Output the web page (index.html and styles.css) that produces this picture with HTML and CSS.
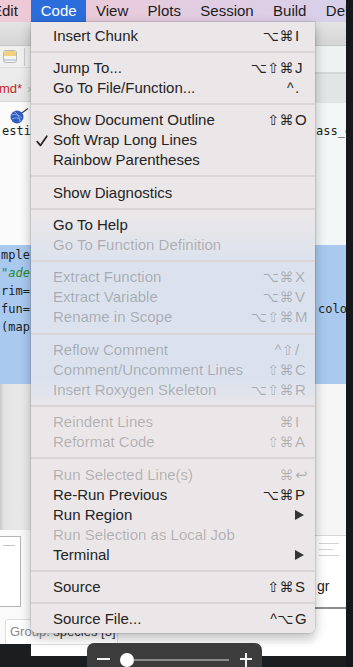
FILE: index.html
```html
<!DOCTYPE html>
<html>
<head>
<meta charset="utf-8">
<link rel="stylesheet" href="styles.css">
</head>
<body>
<div class="screen">
  <div class="window">
    <nav class="menubar">
      <span class="mb-item mb-edit">Edit</span>
      <span class="mb-item mb-active">Code</span>
      <span class="mb-item">View</span>
      <span class="mb-item">Plots</span>
      <span class="mb-item">Session</span>
      <span class="mb-item">Build</span>
      <span class="mb-item">Debug</span>
    </nav>
    <div class="panes">
      <div class="pane-left">
        <div class="l-toolbar"></div>
        <div class="l-tools">
          <svg class="note-icon" width="14" height="13" viewBox="0 0 14 13"><rect x="0.5" y="0.5" width="13" height="12" rx="2" fill="#f6f4ee" stroke="#b9b9b9"/><path d="M1 3 Q1 1 3 1 H11 Q13 1 13 3 V6 H1 Z" fill="#f1d27c"/><rect x="1" y="9" width="12" height="2" fill="#c9d3e3"/></svg>
          <span class="l-divider"></span>
        </div>
        <div class="l-tabs"><span class="tab-name">md*</span><span class="tab-close">›</span></div>
        <div class="l-editor">
          <svg class="yarn" width="22" height="16" viewBox="0 0 22 16"><line x1="11" y1="7" x2="20" y2="0.5" stroke="#3a3a3a" stroke-width="1.2"/><circle cx="9" cy="9" r="6.5" fill="#2f5cc0"/><path d="M3.5 7 Q9 5 14 10 M4 11 Q9 8 13.5 13 M6 3.5 Q11 6 12 14" stroke="#8fb0ee" stroke-width="0.9" fill="none"/></svg>
          <div class="mono">esti</div>
        </div>
        <div class="sel-block">
          <div class="mono">mple</div>
          <div class="mono str">"ade</div>
          <div class="mono">rim=</div>
          <div class="mono">fun=</div>
          <div class="mono">(map</div>
        </div>
        <div class="l-console"></div>
        <div class="l-bottom">
          <div class="l-box"><span class="tiny-line"></span></div>
          <div class="group-input"><span class="gi-label">Group:</span> species [3]</div>
        </div>
        <div class="l-dark"></div>
      </div>
      <div class="pane-mid">
        <div class="mid-fill"></div>
        <div class="mid-foot"></div>
      </div>
      <div class="pane-right">
        <div class="r-toolbar"></div>
        <div class="r-head"></div>
        <div class="r-tabs"></div>
        <div class="r-editor"><div class="mono">ass_g</div></div>
        <div class="sel-block r-sel">
          <div class="mono">&nbsp;</div>
          <div class="mono">&nbsp;</div>
          <div class="mono">&nbsp;</div>
          <div class="mono">colo</div>
          <div class="mono">&nbsp;</div>
        </div>
        <div class="r-console"></div>
        <div class="r-thumb">
          <div class="thumb-lines"><span></span><span></span><span></span></div>
          <div class="thumb-label">gr</div>
        </div>
        <div class="r-rule"></div>
        <div class="r-white"></div>
        <div class="r-dark"></div>
      </div>
    </div>
  </div>

  <div class="code-menu">
    <div class="mi"><span class="mi-check"></span><span class="mi-label">Insert Chunk</span><span class="mi-sc"><span class="mi-mods">⌥⌘</span><span class="mi-key">I</span></span></div>
    <div class="sep"></div>
    <div class="mi"><span class="mi-check"></span><span class="mi-label">Jump To...</span><span class="mi-sc"><span class="mi-mods">⌥⇧⌘</span><span class="mi-key">J</span></span></div>
    <div class="mi"><span class="mi-check"></span><span class="mi-label">Go To File/Function...</span><span class="mi-sc"><span class="mi-mods">^</span><span class="mi-key">.</span></span></div>
    <div class="sep"></div>
    <div class="mi"><span class="mi-check"></span><span class="mi-label">Show Document Outline</span><span class="mi-sc"><span class="mi-mods">⇧⌘</span><span class="mi-key">O</span></span></div>
    <div class="mi"><span class="mi-check"><svg width="12" height="12" viewBox="0 0 12 12"><path d="M1.2 6.6 L4.4 10.4 L10.8 1.2" fill="none" stroke="#222" stroke-width="1.7" stroke-linecap="round" stroke-linejoin="round"/></svg></span><span class="mi-label">Soft Wrap Long Lines</span></div>
    <div class="mi"><span class="mi-check"></span><span class="mi-label">Rainbow Parentheses</span></div>
    <div class="sep"></div>
    <div class="mi"><span class="mi-check"></span><span class="mi-label">Show Diagnostics</span></div>
    <div class="sep"></div>
    <div class="mi"><span class="mi-check"></span><span class="mi-label">Go To Help</span></div>
    <div class="mi off"><span class="mi-check"></span><span class="mi-label">Go To Function Definition</span></div>
    <div class="sep"></div>
    <div class="mi off"><span class="mi-check"></span><span class="mi-label">Extract Function</span><span class="mi-sc"><span class="mi-mods">⌥⌘</span><span class="mi-key">X</span></span></div>
    <div class="mi off"><span class="mi-check"></span><span class="mi-label">Extract Variable</span><span class="mi-sc"><span class="mi-mods">⌥⌘</span><span class="mi-key">V</span></span></div>
    <div class="mi off"><span class="mi-check"></span><span class="mi-label">Rename in Scope</span><span class="mi-sc"><span class="mi-mods">⌥⇧⌘</span><span class="mi-key">M</span></span></div>
    <div class="sep"></div>
    <div class="mi off"><span class="mi-check"></span><span class="mi-label">Reflow Comment</span><span class="mi-sc"><span class="mi-mods">^⇧</span><span class="mi-key">/</span></span></div>
    <div class="mi off"><span class="mi-check"></span><span class="mi-label">Comment/Uncomment Lines</span><span class="mi-sc"><span class="mi-mods">⇧⌘</span><span class="mi-key">C</span></span></div>
    <div class="mi off"><span class="mi-check"></span><span class="mi-label">Insert Roxygen Skeleton</span><span class="mi-sc"><span class="mi-mods">⌥⇧⌘</span><span class="mi-key">R</span></span></div>
    <div class="sep"></div>
    <div class="mi off"><span class="mi-check"></span><span class="mi-label">Reindent Lines</span><span class="mi-sc"><span class="mi-mods">⌘</span><span class="mi-key">I</span></span></div>
    <div class="mi off"><span class="mi-check"></span><span class="mi-label">Reformat Code</span><span class="mi-sc"><span class="mi-mods">⇧⌘</span><span class="mi-key">A</span></span></div>
    <div class="sep"></div>
    <div class="mi off"><span class="mi-check"></span><span class="mi-label">Run Selected Line(s)</span><span class="mi-sc"><span class="mi-mods">⌘</span><span class="mi-key">↩</span></span></div>
    <div class="mi"><span class="mi-check"></span><span class="mi-label">Re-Run Previous</span><span class="mi-sc"><span class="mi-mods">⌥⌘</span><span class="mi-key">P</span></span></div>
    <div class="mi"><span class="mi-check"></span><span class="mi-label">Run Region</span><span class="mi-sc"><span class="mi-key"><svg width="9" height="10" viewBox="0 0 9 10"><polygon points="0,0 9,5 0,10" fill="#333"/></svg></span></span></div>
    <div class="mi off"><span class="mi-check"></span><span class="mi-label">Run Selection as Local Job</span></div>
    <div class="mi"><span class="mi-check"></span><span class="mi-label">Terminal</span><span class="mi-sc"><span class="mi-key"><svg width="9" height="10" viewBox="0 0 9 10"><polygon points="0,0 9,5 0,10" fill="#333"/></svg></span></span></div>
    <div class="sep"></div>
    <div class="mi"><span class="mi-check"></span><span class="mi-label">Source</span><span class="mi-sc"><span class="mi-mods">⇧⌘</span><span class="mi-key">S</span></span></div>
    <div class="sep"></div>
    <div class="mi"><span class="mi-check"></span><span class="mi-label">Source File...</span><span class="mi-sc"><span class="mi-mods">^⌥</span><span class="mi-key">G</span></span></div>
  </div>

  <div class="zoom-ctl">
    <svg width="175" height="24" viewBox="0 0 175 24"><rect x="10" y="15" width="13" height="2" fill="#f2f2f2"/><line x1="47" y1="17" x2="142" y2="17" stroke="#8a8a8a" stroke-width="2"/><circle cx="40" cy="17" r="7" fill="#ffffff"/><rect x="153" y="15" width="12" height="2" fill="#f2f2f2"/><rect x="158" y="10" width="2" height="14" fill="#f2f2f2"/></svg>
  </div>
</div>
</body>
</html>
```
FILE: styles.css
```css
* { box-sizing: border-box; }
html, body { margin: 0; padding: 0; }
body { background: #15171a; font-family: "Liberation Sans", Arial, sans-serif; }

.screen {
  width: 353px;
  height: 667px;
  position: relative;
  overflow: hidden;
  background: #15171a;
  display: flex;
}
.window {
  width: 346px;
  height: 667px;
  display: flex;
  flex-direction: column;
}

/* menu bar */
.menubar {
  height: 22px;
  flex: none;
  display: flex;
  white-space: nowrap;
  overflow: hidden;
  background: linear-gradient(90deg, #efc9d6 0%, #e7cbdc 35%, #e1cde2 60%, #d7d0ea 100%);
  font-size: 15px;
  line-height: 22px;
  color: #1c1c1c;
}
.mb-item { padding: 0 9.7px; flex: none; }
.mb-edit { margin-left: -17.7px; padding-right: 13.2px; }
.mb-active { background: #2b6edb; color: #fff; }

/* panes behind the menu */
.panes { flex: 1; display: flex; min-height: 0; }
.pane-left { width: 31px; flex: none; display: flex; flex-direction: column; position: relative; z-index: 1; }
.pane-mid { flex: 1; display: flex; flex-direction: column; }
.pane-right { width: 31px; flex: none; display: flex; flex-direction: column; overflow: hidden; }

.mono {
  font-family: "DejaVu Sans Mono", "Liberation Mono", monospace;
  font-size: 12px;
  line-height: 18px;
  color: #1e1e1e;
  white-space: nowrap;
}
.str { color: #1f8a2c; font-style: italic; }

.l-toolbar, .r-toolbar {
  height: 24px;
  background: linear-gradient(180deg, #e4e4e4, #d5d5d5);
  border-bottom: 1px solid #c6c6c6;
}
.l-tools {
  height: 22px;
  display: flex;
  align-items: center;
  padding-left: 3px;
  background: #f0f0f0;
  border-bottom: 1px solid #dcdcdc;
}
.l-divider { width: 1px; height: 18px; background: #c9c9c9; margin-left: 7px; }
.l-tabs {
  height: 34px;
  padding-top: 13px;
  background: linear-gradient(180deg, #ededed, #e6e6e6);
  display: flex;
  align-items: flex-start;
  border-bottom: 1px solid #d8d8d8;
  overflow: hidden;
}
.tab-name { font-size: 13px; line-height: 16px; color: #c4262c; margin-left: -1px; }
.tab-close { font-size: 12px; line-height: 16px; color: #b5b5b5; margin-left: 5px; }
.l-editor {
  height: 143px;
  padding-top: 6px;
  background: #fbfbfb;
}
.yarn { display: block; margin-left: 8px; }
.l-editor .mono { line-height: 14px; padding-left: 2px; }

.sel-block {
  height: 139px;
  padding-top: 1px;
  background: #a9c9ef;
}
.sel-block .mono { padding-left: 1px; }
.r-sel .mono { padding-left: 3px; }

.l-console {
  height: 146px;
  background: linear-gradient(90deg, #c9c9c9 0, #e3e3e3 4px, #ececec 31px);
}
.l-bottom {
  height: 114px;
  background: #fafafa;
  padding-top: 6px;
}
.l-box {
  width: 22px;
  height: 71px;
  margin-left: -1px;
  border: 1px solid #b4b4b4;
  background: #ffffff;
  padding: 8px 0 0 3px;
}
.tiny-line { display: block; width: 12px; height: 1px; background: #c4c4c4; }
.group-input {
  width: 113px;
  height: 26px;
  margin: 12px 0 0 5px;
  border: 1px solid #dedede;
  border-radius: 3px;
  background: #ffffff;
  font-size: 13px;
  line-height: 24px;
  padding-left: 4px;
  color: #333;
  white-space: nowrap;
}
.gi-label { color: #8a8a8a; }
.l-dark { flex: 1; background: #1c1d1f; }

.mid-fill { flex: 1; background: #fafafa; }
.mid-foot {
  height: 23px;
  flex: none;
  background: linear-gradient(180deg, #ffffff 0, #ffffff 12px, #1c1d1f 12px);
}

.r-head { height: 26px; background: #eef2f2; }
.r-tabs { height: 31px; background: #e2e5e5; border-top: 2px solid #d3d7d7; }
.r-editor { height: 142px; background: #f3f6f6; padding-top: 21px; }
.r-editor .mono { line-height: 14px; padding-left: 1px; }
.r-console { height: 151px; background: #f6f6f6; }
.r-thumb {
  height: 72px;
  background: #ffffff;
  border-top: 1px solid #d6d6d6;
  display: flex;
  flex-direction: column;
}
.thumb-lines { height: 41px; display: flex; flex-direction: column; gap: 5px; padding: 7px 0 0 4px; }
.thumb-lines span { display: block; width: 20px; height: 1px; background: #d2d2d2; }
.thumb-lines span:nth-child(2) { width: 14px; }
.thumb-label { font-size: 14px; line-height: 18px; color: #222; padding-left: 2px; }
.r-rule { height: 2px; background: #8d8d8d; }
.r-white { height: 47px; background: #ffffff; }
.r-dark { flex: 1; background: #1c1d1f; }

/* the open Code menu */
.code-menu {
  position: absolute;
  left: 31px;
  top: 22px;
  width: 284px;
  padding: 3.5px 0 4px;
  border-radius: 0 0 6px 6px;
  background: linear-gradient(180deg,
    #ebe7e9 0px, #ebe7e9 193px,
    #dbe2ed 240px, #dbe2ed 358px,
    #ebe7e9 390px, #ebe7e9 100%);
  box-shadow: 0 4px 12px rgba(0, 0, 0, 0.28), 0 0 0 0.5px rgba(0, 0, 0, 0.18);
  z-index: 5;
}
.mi {
  display: flex;
  align-items: center;
  height: 20px;
  padding: 0 7px 0 5px;
  font-size: 15px;
  line-height: 20px;
  color: #232323;
  white-space: nowrap;
}
.mi.off { color: rgba(0, 0, 0, 0.25); }
.mi-check { width: 17px; flex: none; display: flex; align-items: center; }
.mi-check svg { display: block; margin-top: 1px; }
.mi-label { flex: 1; }
.mi-sc { display: flex; align-items: center; flex: none; font-family: "Liberation Sans", "DejaVu Sans", sans-serif; }
.mi-mods { text-align: right; font-size: 14px; letter-spacing: 0.5px; }
.mi-key { width: 14px; padding-left: 1px; display: flex; align-items: center; }
.sep { padding: 5.2px 0; }
.sep::before { content: ""; display: block; height: 2px; background: #d9d5d7; }

.zoom-ctl {
  position: absolute;
  left: 87px;
  top: 643px;
  width: 175px;
  height: 24px;
  background: #3c3c3d;
  border-radius: 7px 7px 0 0;
  z-index: 6;
}
.zoom-ctl svg { display: block; }
```
